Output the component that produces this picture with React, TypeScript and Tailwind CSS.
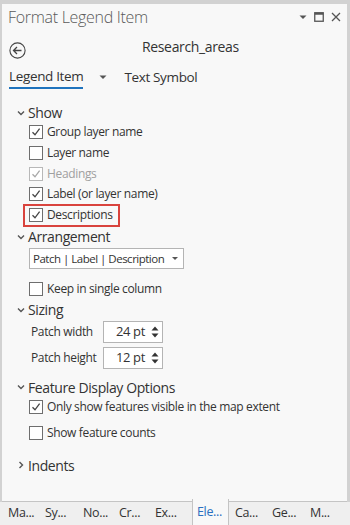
import React from 'react';

function Check({ checked, disabled }: { checked?: boolean; disabled?: boolean }) {
  return (
    <span
      className={`inline-flex h-[14px] w-[14px] shrink-0 items-center justify-center border bg-white ${
        disabled ? 'border-[#b8b8b8]' : 'border-[#6e6e6e]'
      }`}
    >
      {checked && (
        <svg width="10" height="10" viewBox="0 0 10 10">
          <path
            d="M1.5 5.2 L4 7.8 L8.6 1.6"
            fill="none"
            stroke={disabled ? '#a8a8a8' : '#444'}
            strokeWidth="1.3"
          />
        </svg>
      )}
    </span>
  );
}

function Chevron({ open = true }: { open?: boolean }) {
  return (
    <svg width="8" height="8" viewBox="0 0 8 8" className="shrink-0">
      {open ? (
        <path d="M1 2.5 L4 5.5 L7 2.5" fill="none" stroke="#555" strokeWidth="1.4" />
      ) : (
        <path d="M2.5 1 L5.5 4 L2.5 7" fill="none" stroke="#555" strokeWidth="1.4" />
      )}
    </svg>
  );
}

function Section({ label, open = true }: { label: string; open?: boolean }) {
  return (
    <div className="flex items-center gap-[3px] pl-[15px] text-[14px] tracking-[-0.4px] text-[#333]">
      <Chevron open={open} />
      <span>{label}</span>
    </div>
  );
}

function CheckRow({
  label,
  checked,
  disabled,
  h,
}: {
  label: string;
  checked?: boolean;
  disabled?: boolean;
  h: string;
}) {
  return (
    <div className={`flex items-center gap-[4px] pl-[27px] ${h}`}>
      <Check checked={checked} disabled={disabled} />
      <span className={disabled ? 'text-[#a0a0a0]' : 'text-[#333]'}>{label}</span>
    </div>
  );
}

function Spinner({ value }: { value: string }) {
  return (
    <div className="flex h-[22px] w-[60px] items-center justify-end border border-[#b4b4b4] bg-white pr-[3px]">
      <span className="mr-[6px] text-[13px] text-[#333]">{value}</span>
      <svg width="8" height="14" viewBox="0 0 8 14">
        <path d="M0.5 5.5 L4 1.5 L7.5 5.5 Z" fill="#333" />
        <path d="M0.5 8.5 L4 12.5 L7.5 8.5 Z" fill="#333" />
      </svg>
    </div>
  );
}

const tabs = [
  { t: 'Ma...', w: 'w-[37px]' },
  { t: 'Sy...', w: 'w-[38px]' },
  { t: 'No...', w: 'w-[36px]' },
  { t: 'Cr...', w: 'w-[36px]' },
  { t: 'Ex...', w: 'w-[43px]' },
  { t: 'Ele...', w: 'w-[37px]', active: true },
  { t: 'Ca...', w: 'w-[37px]' },
  { t: 'Ge...', w: 'w-[38px]' },
  { t: 'M...', w: 'w-[40px]' },
];

export default function App() {
  return (
    <div
      className="flex h-[525px] w-[350px] flex-col bg-[#d2d2d2] pt-[4px] pl-[2px] pr-[3px] text-[12px] tracking-[-0.35px]"
      style={{ fontFamily: '"Open Sans", "Noto Sans", sans-serif' }}
    >
      <div className="flex flex-1 flex-col bg-[#f8f8f8]">
        {/* title bar */}
        <div className="flex h-[26px] items-center justify-between pl-[6px] pr-[6px]">
          <span className="text-[16px] font-light tracking-[-0.3px] text-[#5a5a5a]">Format Legend Item</span>
          <div className="flex items-center gap-[7px]">
            <svg width="8" height="6" viewBox="0 0 8 6">
              <path d="M0.5 1.5 L7.5 1.5 L4 5 Z" fill="#555" />
            </svg>
            <svg width="10" height="10" viewBox="0 0 10 10">
              <rect x="0.75" y="0.75" width="8.5" height="8.5" fill="none" stroke="#555" strokeWidth="1.3" />
              <rect x="0.75" y="0.75" width="8.5" height="2" fill="#555" />
            </svg>
            <svg width="10" height="10" viewBox="0 0 10 10">
              <path d="M1 1 L9 9 M9 1 L1 9" stroke="#555" strokeWidth="1.3" />
            </svg>
          </div>
        </div>

        {/* layer name row */}
        <div className="flex h-[32px] items-center">
          <div className="mt-[8px] w-[26px] pl-[7px]">
            <svg width="17" height="17" viewBox="0 0 17 17">
              <circle cx="8.5" cy="8.5" r="7.6" fill="none" stroke="#444" strokeWidth="1.1" />
              <path d="M12.5 8.5 L4.6 8.5 M8 5 L4.5 8.5 L8 12" fill="none" stroke="#444" strokeWidth="1.3" />
            </svg>
          </div>
          <span className="ml-[114px] text-[14px] text-[#333]">Research_areas</span>
        </div>

        {/* tabs */}
        <div className="mt-[3px] flex h-[24px] items-stretch pl-[7px] text-[13.5px] text-[#333]">
          <span className="flex items-center border-b-2 border-[#1f73bd]">Legend Item</span>
          <span className="ml-[16px] flex items-center">
            <svg width="8" height="6" viewBox="0 0 8 6">
              <path d="M0.5 1.5 L7.5 1.5 L4 5 Z" fill="#555" />
            </svg>
          </span>
          <span className="ml-[17px] flex items-center">Text Symbol</span>
        </div>

        <div className="h-[14px]" />

        {/* Show */}
        <div className="flex h-[19px] items-center">
          <Section label="Show" />
        </div>
        <CheckRow label="Group layer name" checked h="h-[20px]" />
        <CheckRow label="Layer name" h="h-[21px]" />
        <CheckRow label="Headings" checked disabled h="h-[21px]" />
        <CheckRow label="Label (or layer name)" checked h="h-[20px]" />
        <div className="flex h-[22px] items-center pl-[21px]">
          <div className="flex h-[23px] w-[97px] items-center gap-[4px] border-2 border-[#d9433d] pl-[4px]">
            <Check checked />
            <span className="text-[#333]">Descriptions</span>
          </div>
        </div>

        {/* Arrangement */}
        <div className="flex h-[21px] items-center">
          <Section label="Arrangement" />
        </div>
        <div className="flex h-[23px] items-center pl-[27px]">
          <div className="flex h-[21px] w-[155px] items-center justify-between whitespace-nowrap border border-[#b4b4b4] bg-white pl-[3px] pr-[5px] text-[11.5px] tracking-[-0.5px] text-[#333]">
            <span>Patch | Label | Description</span>
            <svg width="6" height="5" viewBox="0 0 6 5">
              <path d="M0 1 L6 1 L3 4 Z" fill="#555" />
            </svg>
          </div>
        </div>
        <div className="h-[9px]" />
        <CheckRow label="Keep in single column" h="h-[20px]" />

        {/* Sizing */}
        <div className="flex h-[21px] items-center">
          <Section label="Sizing" />
        </div>
        <div className="flex h-[24px] items-center pl-[29px]">
          <span className="w-[72px] text-[#333]">Patch width</span>
          <Spinner value="24 pt" />
        </div>
        <div className="h-[2px]" />
        <div className="flex h-[24px] items-center pl-[29px]">
          <span className="w-[72px] text-[#333]">Patch height</span>
          <Spinner value="12 pt" />
        </div>

        <div className="h-[7px]" />
        <div className="flex h-[20px] items-center">
          <Section label="Feature Display Options" />
        </div>
        <CheckRow label="Only show features visible in the map extent" checked h="h-[19px]" />
        <div className="h-[7px]" />
        <CheckRow label="Show feature counts" h="h-[20px]" />

        <div className="h-[12px]" />
        <div className="flex h-[20px] items-center">
          <Section label="Indents" open={false} />
        </div>
        <div className="flex-1 border-b border-[#c4c4c4]" />
      </div>

      {/* bottom tabs */}
      <div className="-ml-[2px] -mr-[3px] flex h-[23px] items-end bg-[#efefef] pl-[2px] text-[12.5px] text-[#333]">
        {tabs.map((tab) => (
          <div
            key={tab.t}
            className={
              tab.active
                ? `-mt-[2px] flex h-[26px] shrink-0 items-center border-x border-[#c4c4c4] bg-[#f8f8f8] pl-[4px] text-[#2a6fc0] ${tab.w}`
                : `flex h-[23px] shrink-0 items-center pl-[6px] ${tab.w}`
            }
          >
            {tab.t}
          </div>
        ))}
      </div>
    </div>
  );
}
